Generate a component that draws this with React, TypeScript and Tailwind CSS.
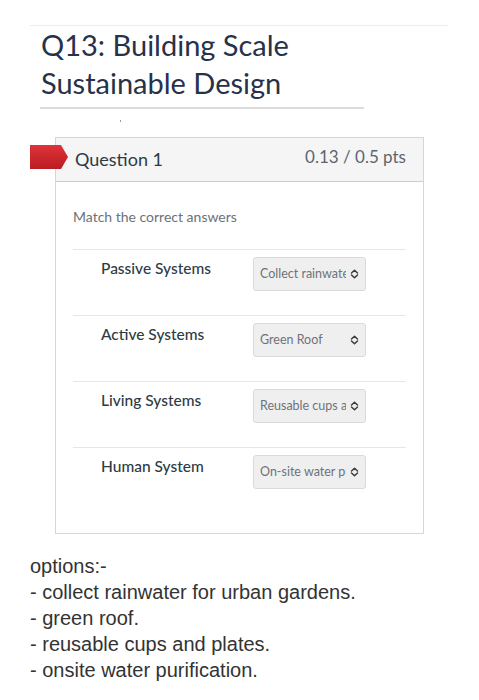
import React from "react";

const rows = [
  { label: "Passive Systems", value: "Collect rainwater for urban gardens" },
  { label: "Active Systems", value: "Green Roof" },
  { label: "Living Systems", value: "Reusable cups and plates" },
  { label: "Human System", value: "On-site water purification" },
];

function UpDown() {
  return (
    <svg width="9" height="10" viewBox="0 0 9 10" className="shrink-0">
      <path d="M1.5 4 L4.5 1.3 L7.5 4" fill="none" stroke="#3a3a3a" strokeWidth="1.5" strokeLinecap="round" strokeLinejoin="round" />
      <path d="M1.5 6 L4.5 8.7 L7.5 6" fill="none" stroke="#3a3a3a" strokeWidth="1.5" strokeLinecap="round" strokeLinejoin="round" />
    </svg>
  );
}

export default function App() {
  const lato = { fontFamily: "Lato, 'Open Sans', sans-serif" };
  return (
    <div className="w-[479px] h-[700px] bg-white overflow-hidden relative">
      <div className="pt-[25px] pl-[30px]">
        <div className="w-[418px] h-[1px] bg-[#ececec]" />
      </div>
      <div className="pl-[41px] pt-0 text-[29px] leading-[38px] text-[#27324a]" style={lato}>
        <div>Q13: Building Scale</div>
        <div>Sustainable Design</div>
      </div>
      <div className="pl-[40px] pt-[5px]">
        <div className="w-[324px] h-[2px] bg-[#dcdcdc]" />
      </div>
      <div className="pl-[120px] pt-[11px] h-[28px]">
        <div className="w-[1px] h-[2px] bg-[#999]" />
      </div>
      <div className="relative ml-[55px] w-[369px] h-[397px] border border-[#d4d6d8]" style={lato}>
        <div className="absolute left-[-26px] top-[7px] w-[38px] h-[24px]">
          <svg width="38" height="24" viewBox="0 0 38 24">
            <defs>
              <linearGradient id="fl" x1="0" y1="0" x2="0" y2="1">
                <stop offset="0" stopColor="#e0333a" />
                <stop offset="1" stopColor="#b81c22" />
              </linearGradient>
            </defs>
            <polygon points="0,0 31,0 38,12 31,24 0,24" fill="url(#fl)" />
          </svg>
        </div>
        <div className="h-[44px] bg-[#f5f5f5] border-b border-[#c9cdd0] flex items-center justify-between pl-[19px] pr-[17px]">
          <span className="text-[18px] text-[#2d3b45]">Question 1</span>
          <span className="text-[17px] text-[#5b6670] -mt-[6px]">0.13 / 0.5 pts</span>
        </div>
        <div className="px-[17px]">
          <div className="pt-[25px] pb-[22px] text-[14px] leading-[20px] text-[#6b7278]">Match the correct answers</div>
          {rows.map((r) => (
            <div key={r.label} className="h-[66px] border-t border-[#e4e6e8] flex items-start pl-[28px]">
              <div className="w-[152px] pt-[7px] text-[15.5px] font-medium text-[#2d3b45]">{r.label}</div>
              <div className="mt-[7px] w-[113px] h-[34px] bg-[#efefef] border border-[#dadada] rounded-[3px] flex items-center pl-[6px] pr-[6px]">
                <span className="w-[88px] mr-[4px] overflow-hidden whitespace-nowrap text-[12.5px] text-[#6e737a]">{r.value}</span>
                <UpDown />
              </div>
            </div>
          ))}
        </div>
      </div>
      <div className="pl-[30px] pt-[19px] text-[20px] leading-[26px] text-[#333]" style={{ fontFamily: "'Liberation Sans', Arial, sans-serif" }}>
        <div>options:-</div>
        <div>- collect rainwater for urban gardens.</div>
        <div>- green roof.</div>
        <div>- reusable cups and plates.</div>
        <div>- onsite water purification.</div>
      </div>
    </div>
  );
}
